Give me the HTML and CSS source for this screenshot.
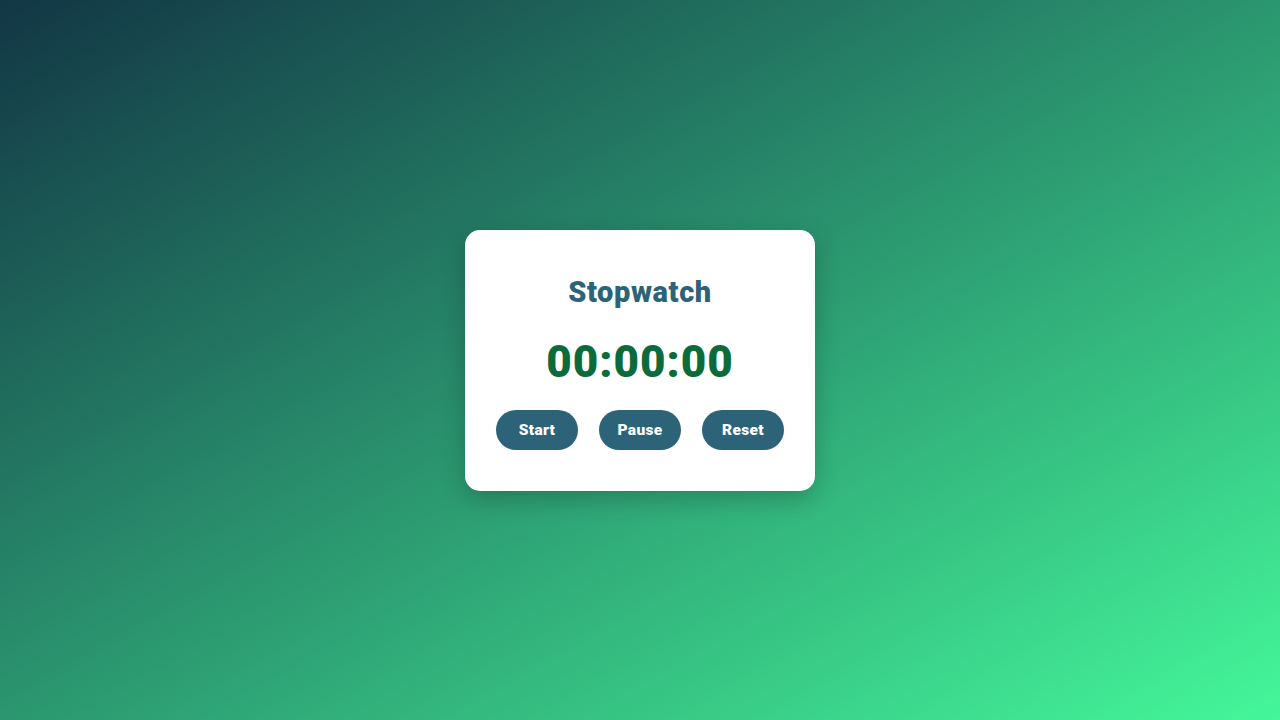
FILE: index.html
```html
<!DOCTYPE html>
<html>
<head>
<meta charset="utf-8">
<title>Stopwatch</title>
<link rel="stylesheet" href="styles.css">
</head>
<body>
<div class="card">
  <h1 class="title">Stopwatch</h1>
  <div class="time">00:00:00</div>
  <div class="buttons">
    <button class="btn">Start</button>
    <button class="btn">Pause</button>
    <button class="btn">Reset</button>
  </div>
</div>
</body>
</html>
```
FILE: styles.css
```css
html, body {
  margin: 0;
  height: 100%;
}
body {
  background: linear-gradient(to bottom right, #123645 0%, #44f79a 100%);
  display: flex;
  align-items: center;
  justify-content: center;
  font-family: Roboto, "Liberation Sans", sans-serif;
}
.card {
  width: 350px;
  height: 261px;
  box-sizing: border-box;
  background: #fff;
  border-radius: 15px;
  box-shadow: 0 8px 24px rgba(0, 0, 0, 0.22);
  display: flex;
  flex-direction: column;
  align-items: center;
  padding-top: 40px;
}
.title {
  margin: 0;
  font-size: 29px;
  font-weight: 900;
  color: #2c6378;
  line-height: 44px;
  letter-spacing: 0.6px;
}
.time {
  margin-top: 22px;
  font-size: 44px;
  font-weight: 900;
  color: #0b6b3b;
  line-height: 52px;
  letter-spacing: 1px;
}
.buttons {
  margin-top: 22px;
  display: flex;
  gap: 21px;
}
.btn {
  width: 82px;
  height: 40px;
  border: none;
  border-radius: 20px;
  background: #2c6378;
  color: #fff;
  font-family: Roboto, "Liberation Sans", sans-serif;
  font-size: 15.5px;
  font-weight: 900;
  letter-spacing: 0.3px;
  padding: 0;
}
```
